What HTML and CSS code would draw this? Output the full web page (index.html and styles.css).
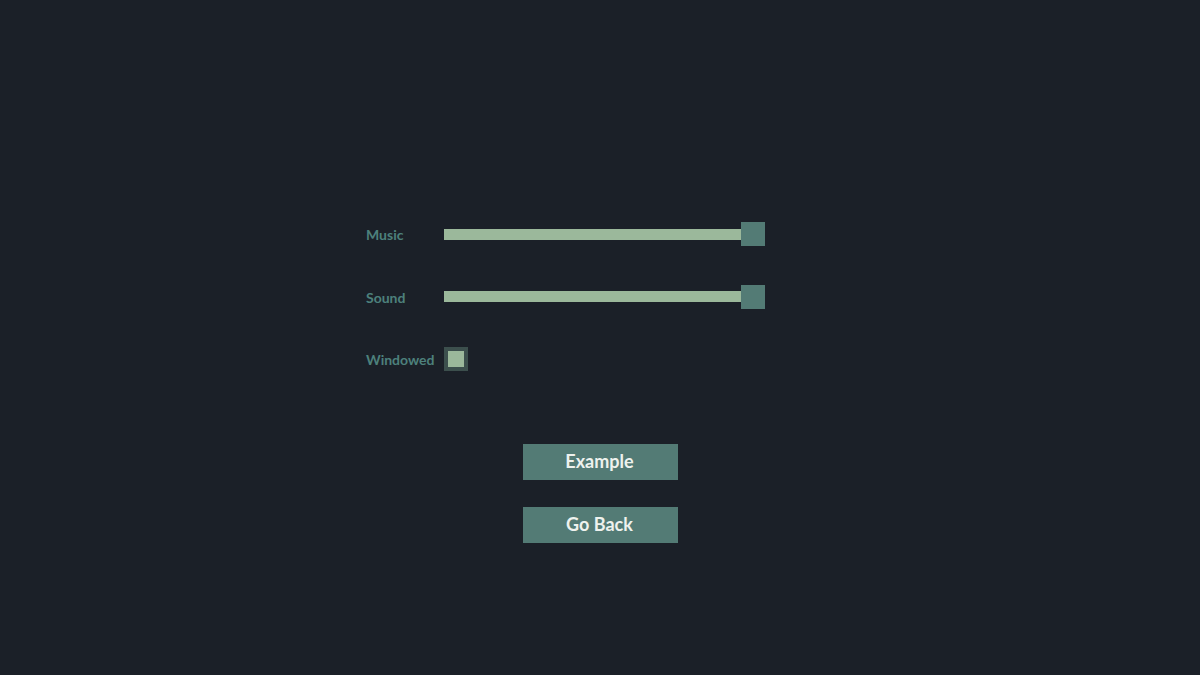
FILE: index.html
```html
<!DOCTYPE html>
<html>
<head>
<meta charset="utf-8">
<link rel="stylesheet" href="styles.css">
</head>
<body>
<div class="screen">
  <div class="settings">
    <div class="row">
      <span class="label">Music</span>
      <div class="slider"><div class="track"></div><div class="handle"></div></div>
    </div>
    <div class="row">
      <span class="label">Sound</span>
      <div class="slider"><div class="track"></div><div class="handle"></div></div>
    </div>
    <div class="row">
      <span class="label">Windowed</span>
      <div class="checkbox"><div class="check-fill"></div></div>
    </div>
  </div>
  <div class="buttons">
    <button class="btn">Example</button>
    <button class="btn">Go Back</button>
  </div>
</div>
</body>
</html>
```
FILE: styles.css
```css
html, body {
  margin: 0;
  padding: 0;
  background: #1b2028;
}
.screen {
  width: 1200px;
  height: 675px;
  display: flex;
  flex-direction: column;
  font-family: Lato, "Liberation Sans", sans-serif;
}
.settings {
  margin-top: 222px;
  margin-left: 366px;
  display: flex;
  flex-direction: column;
  gap: 38.5px;
}
.row {
  display: flex;
  align-items: center;
  height: 24px;
}
.label {
  width: 78px;
  color: #4d807c;
  font-weight: 700;
  font-size: 14px;
  padding-top: 1px;
}
.slider {
  display: flex;
  align-items: center;
  width: 321px;
}
.track {
  width: 297px;
  height: 11px;
  background: #9bb89b;
}
.handle {
  width: 24px;
  height: 24px;
  background: #537b75;
}
.checkbox {
  width: 24px;
  height: 24px;
  box-sizing: border-box;
  border: 4px solid #3c4f4d;
  display: flex;
  align-items: center;
  justify-content: center;
}
.check-fill {
  width: 16px;
  height: 16px;
  background: #9bb89b;
}
.buttons {
  margin-top: 73px;
  display: flex;
  flex-direction: column;
  align-items: center;
  gap: 27px;
}
.btn {
  width: 155px;
  height: 36px;
  border: none;
  padding: 0 1px 2px 0;
  margin: 0;
  background: #537b75;
  color: #eef2ee;
  font-family: Lato, "Liberation Sans", sans-serif;
  font-weight: 700;
  font-size: 18px;
}
```
